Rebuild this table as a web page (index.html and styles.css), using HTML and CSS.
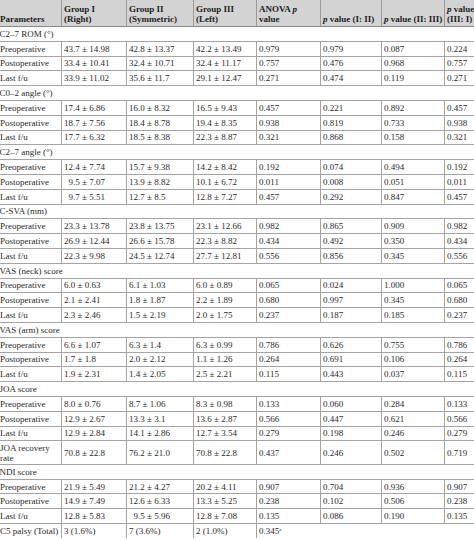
FILE: index.html
```html
<!DOCTYPE html>
<html>
<head>
<meta charset="utf-8">
<link rel="stylesheet" href="styles.css">
</head>
<body>
<table class="tbl">
<colgroup>
<col class="c1"><col class="c2"><col class="c3"><col class="c4"><col class="c5"><col class="c6"><col class="c7"><col class="c8">
</colgroup>
<thead>
<tr class="head">
<th>Parameters</th>
<th>Group I<br>(Right)</th>
<th>Group II<br>(Symmetric)</th>
<th>Group III<br>(Left)</th>
<th>ANOVA <i>p</i><br>value</th>
<th><i>p</i> value (I: II)</th>
<th><i>p</i> value (II: III)</th>
<th><i>p</i> value<br>(III: I)</th>
</tr>
</thead>
<tbody>
<tr class="sec"><td colspan="8">C2–7 ROM (°)</td></tr>
<tr><td>Preoperative</td><td>43.7 ± 14.98</td><td>42.8 ± 13.37</td><td>42.2 ± 13.49</td><td>0.979</td><td>0.979</td><td>0.087</td><td>0.224</td></tr>
<tr><td>Postoperative</td><td>33.4 ± 10.41</td><td>32.4 ± 10.71</td><td>32.4 ± 11.17</td><td>0.757</td><td>0.476</td><td>0.968</td><td>0.757</td></tr>
<tr><td>Last f/u</td><td>33.9 ± 11.02</td><td>35.6 ± 11.7</td><td>29.1 ± 12.47</td><td>0.271</td><td>0.474</td><td>0.119</td><td>0.271</td></tr>

<tr class="sec"><td colspan="8">C0–2 angle (°)</td></tr>
<tr><td>Preoperative</td><td>17.4 ± 6.86</td><td>16.0 ± 8.32</td><td>16.5 ± 9.43</td><td>0.457</td><td>0.221</td><td>0.892</td><td>0.457</td></tr>
<tr><td>Postoperative</td><td>18.7 ± 7.56</td><td>18.4 ± 8.78</td><td>19.4 ± 8.35</td><td>0.938</td><td>0.819</td><td>0.733</td><td>0.938</td></tr>
<tr><td>Last f/u</td><td>17.7 ± 6.32</td><td>18.5 ± 8.38</td><td>22.3 ± 8.87</td><td>0.321</td><td>0.868</td><td>0.158</td><td>0.321</td></tr>

<tr class="sec"><td colspan="8">C2–7 angle (°)</td></tr>
<tr><td>Preoperative</td><td>12.4 ± 7.74</td><td>15.7 ± 9.38</td><td>14.2 ± 8.42</td><td>0.192</td><td>0.074</td><td>0.494</td><td>0.192</td></tr>
<tr><td>Postoperative</td><td class="ind">9.5 ± 7.07</td><td>13.9 ± 8.82</td><td>10.1 ± 6.72</td><td>0.011</td><td>0.008</td><td>0.051</td><td>0.011</td></tr>
<tr><td>Last f/u</td><td class="ind">9.7 ± 5.51</td><td>12.7 ± 8.5</td><td>12.8 ± 7.27</td><td>0.457</td><td>0.292</td><td>0.847</td><td>0.457</td></tr>

<tr class="sec"><td colspan="8">C-SVA (mm)</td></tr>
<tr><td>Preoperative</td><td>23.3 ± 13.78</td><td>23.8 ± 13.75</td><td>23.1 ± 12.66</td><td>0.982</td><td>0.865</td><td>0.909</td><td>0.982</td></tr>
<tr><td>Postoperative</td><td>26.9 ± 12.44</td><td>26.6 ± 15.78</td><td>22.3 ± 8.82</td><td>0.434</td><td>0.492</td><td>0.350</td><td>0.434</td></tr>
<tr><td>Last f/u</td><td>22.3 ± 9.98</td><td>24.5 ± 12.74</td><td>27.7 ± 12.81</td><td>0.556</td><td>0.856</td><td>0.345</td><td>0.556</td></tr>

<tr class="sec"><td colspan="8">VAS (neck) score</td></tr>
<tr><td>Preoperative</td><td>6.0 ± 0.63</td><td>6.1 ± 1.03</td><td>6.0 ± 0.89</td><td>0.065</td><td>0.024</td><td>1.000</td><td>0.065</td></tr>
<tr><td>Postoperative</td><td>2.1 ± 2.41</td><td>1.8 ± 1.87</td><td>2.2 ± 1.89</td><td>0.680</td><td>0.997</td><td>0.345</td><td>0.680</td></tr>
<tr><td>Last f/u</td><td>2.3 ± 2.46</td><td>1.5 ± 2.19</td><td>2.0 ± 1.75</td><td>0.237</td><td>0.187</td><td>0.185</td><td>0.237</td></tr>

<tr class="sec"><td colspan="8">VAS (arm) score</td></tr>
<tr><td>Preoperative</td><td>6.6 ± 1.07</td><td>6.3 ± 1.4</td><td>6.3 ± 0.99</td><td>0.786</td><td>0.626</td><td>0.755</td><td>0.786</td></tr>
<tr><td>Postoperative</td><td>1.7 ± 1.8</td><td>2.0 ± 2.12</td><td>1.1 ± 1.26</td><td>0.264</td><td>0.691</td><td>0.106</td><td>0.264</td></tr>
<tr><td>Last f/u</td><td>1.9 ± 2.31</td><td>1.4 ± 2.05</td><td>2.5 ± 2.21</td><td>0.115</td><td>0.443</td><td>0.037</td><td>0.115</td></tr>

<tr class="sec"><td colspan="8">JOA score</td></tr>
<tr><td>Preoperative</td><td>8.0 ± 0.76</td><td>8.7 ± 1.06</td><td>8.3 ± 0.98</td><td>0.133</td><td>0.060</td><td>0.284</td><td>0.133</td></tr>
<tr><td>Postoperative</td><td>12.9 ± 2.67</td><td>13.3 ± 3.1</td><td>13.6 ± 2.87</td><td>0.566</td><td>0.447</td><td>0.621</td><td>0.566</td></tr>
<tr><td>Last f/u</td><td>12.9 ± 2.84</td><td>14.1 ± 2.86</td><td>12.7 ± 3.54</td><td>0.279</td><td>0.198</td><td>0.246</td><td>0.279</td></tr>
<tr class="dbl"><td>JOA recovery<br>rate</td><td>70.8 ± 22.8</td><td>76.2 ± 21.0</td><td>70.8 ± 22.8</td><td>0.437</td><td>0.246</td><td>0.502</td><td>0.719</td></tr>

<tr class="sec"><td colspan="8">NDI score</td></tr>
<tr><td>Preoperative</td><td>21.9 ± 5.49</td><td>21.2 ± 4.27</td><td>20.2 ± 4.11</td><td>0.907</td><td>0.704</td><td>0.936</td><td>0.907</td></tr>
<tr><td>Postoperative</td><td>14.9 ± 7.49</td><td>12.6 ± 6.33</td><td>13.3 ± 5.25</td><td>0.238</td><td>0.102</td><td>0.506</td><td>0.238</td></tr>
<tr><td>Last f/u</td><td>12.8 ± 5.83</td><td class="ind">9.5 ± 5.96</td><td>12.8 ± 7.08</td><td>0.135</td><td>0.086</td><td>0.190</td><td>0.135</td></tr>
<tr class="last"><td>C5 palsy (Total)</td><td>3 (1.6%)</td><td>7 (3.6%)</td><td>2 (1.0%)</td><td colspan="4">0.345<sup>a</sup></td></tr>
</tbody>
</table>
</body>
</html>
```

FILE: styles.css
```css
html, body {
  margin: 0;
  padding: 0;
  background: #ffffff;
}

.tbl {
  border-collapse: collapse;
  table-layout: fixed;
  width: 509px;
  margin-left: -3px;
  font-family: "Liberation Serif", "Times New Roman", serif;
  font-size: 9px;
  color: #2a2a2a;
}

.c1 { width: 64px; }
.c2 { width: 65px; }
.c3 { width: 67px; }
.c4 { width: 63px; }
.c5 { width: 64px; }
.c6 { width: 61px; }
.c7 { width: 63px; }
.c8 { width: 62px; }

.tbl th,
.tbl td {
  padding: 0 2px;
  text-align: left;
  white-space: nowrap;
  overflow: hidden;
}

.head th {
  background: #d3d3d3;
  color: #222;
  font-weight: bold;
  line-height: 9.5px;
  height: 23px;
  padding: 1px 2px 2px;
  vertical-align: bottom;
  border-left: 1px solid #9a9a9a;
  border-bottom: 1px solid #8a8a8a;
}

.tbl tbody tr {
  height: 14.8px;
}

.tbl tbody td {
  line-height: 10px;
  vertical-align: middle;
  border: 1px solid #a4a4a4;
}

.tbl tbody tr.sec td {
  border-left: none;
  border-right: none;
}

.tbl tbody tr.dbl {
  height: 23.5px;
}

.tbl td.ind {
  padding-left: 6.5px;
}

.tbl sup {
  font-size: 5px;
  line-height: 0;
  vertical-align: 3px;
}

.tbl tbody tr.last td {
  border-bottom: none;
}

.tbl tbody tr.last td:last-child {
  border-right: none;
}
```
